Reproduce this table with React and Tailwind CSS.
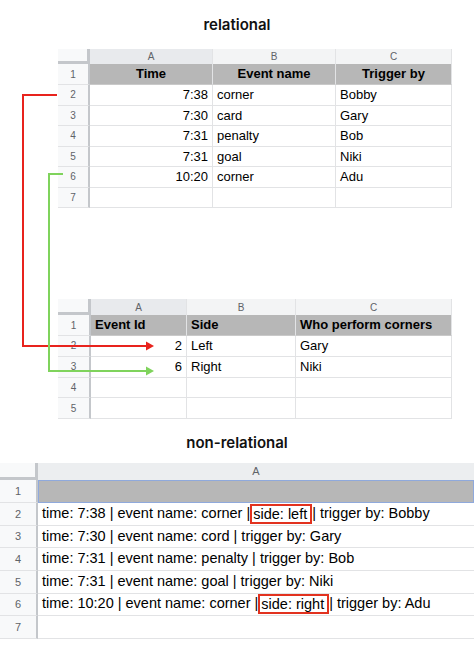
import React from "react";

const F = { fontFamily: '"Liberation Sans", Arial, sans-serif' };

function HeaderRow({ cols, heightClass, cornerW }) {
  return (
    <div className={`flex ${heightClass}`}>
      <div
        className="shrink-0 bg-[#f8f9fa] border-r-[3px] border-b-[3px] border-[#c4c7cb]"
        style={{ width: cornerW }}
      />
      {cols.map((c, i) => (
        <div
          key={i}
          className={`shrink-0 flex items-center justify-center text-[10px] text-[#5f6368] border-r border-[#e2e3e5] ${
            c.sel ? "bg-[#e8eaed]" : "bg-[#f3f4f5]"
          }`}
          style={{ width: c.w }}
        >
          {c.l}
        </div>
      ))}
    </div>
  );
}

function Row({ n, cells, cols, heightClass, cornerW, head }) {
  return (
    <div className={`flex ${heightClass}`}>
      <div
        className="shrink-0 flex items-center justify-center text-[10px] text-[#5f6368] bg-[#f8f9fa] border-r-[2px] border-r-[#c4c7cb] border-b border-b-[#e2e3e5]"
        style={{ width: cornerW }}
      >
        {n}
      </div>
      {cols.map((c, i) => {
        const cell = cells[i] || {};
        return (
          <div
            key={i}
            className={`shrink-0 flex items-center px-[4px] text-[13px] text-black whitespace-nowrap overflow-hidden border-r border-b border-[#e2e3e5] ${
              head ? "bg-[#b7b7b7] font-bold border-b-[#c9c9c9]" : "bg-white"
            } ${
              cell.a === "r"
                ? "justify-end"
                : cell.a === "c"
                ? "justify-center"
                : "justify-start"
            }`}
            style={{ width: c.w }}
          >
            {cell.t}
          </div>
        );
      })}
    </div>
  );
}

function Box({ children }) {
  return (
    <span className="border-2 border-[#e2321f] pl-[1px] pr-[3px] leading-[16px] inline-block">
      {children}
    </span>
  );
}

export default function App() {
  const cols1 = [
    { l: "A", w: 123, sel: true },
    { l: "B", w: 123 },
    { l: "C", w: 116 },
  ];
  const rows1 = [
    [{ t: "7:38", a: "r" }, { t: "corner" }, { t: "Bobby" }],
    [{ t: "7:30", a: "r" }, { t: "card" }, { t: "Gary" }],
    [{ t: "7:31", a: "r" }, { t: "penalty" }, { t: "Bob" }],
    [{ t: "7:31", a: "r" }, { t: "goal" }, { t: "Niki" }],
    [{ t: "10:20", a: "r" }, { t: "corner" }, { t: "Adu" }],
    [],
  ];
  const cols2 = [
    { l: "A", w: 96, sel: true },
    { l: "B", w: 109 },
    { l: "C", w: 156 },
  ];
  const rows2 = [
    [{ t: "2", a: "r" }, { t: "Left" }, { t: "Gary" }],
    [{ t: "6", a: "r" }, { t: "Right" }, { t: "Niki" }],
    [],
    [],
  ];
  const rows3 = [
    <>
      time: 7:38 | event name: corner |<Box>side: left</Box> | trigger by: Bobby
    </>,
    <>time: 7:30 | event name: cord | trigger by: Gary</>,
    <>time: 7:31 | event name: penalty | trigger by: Bob</>,
    <>time: 7:31 | event name: goal | trigger by: Niki</>,
    <>
      time: 10:20 | event name: corner |<Box>side: right</Box> | trigger by: Adu
    </>,
    null,
  ];

  return (
    <div className="relative w-[474px] h-[651px] bg-white overflow-hidden" style={F}>
      <div
        className="pt-[15px] h-[35px] text-center text-[15px] leading-[20px] font-semibold text-[#111]"
        style={{ fontFamily: "Inter, sans-serif" }}
      >
        relational
      </div>

      <div className="mt-[14px] ml-[58px] w-[394px]">
        <HeaderRow cols={cols1} heightClass="h-[15px]" cornerW={32} />
        <Row
          n={1}
          head
          cols={cols1}
          heightClass="h-[21px]"
          cornerW={32}
          cells={[
            { t: "Time", a: "c" },
            { t: "Event name", a: "c" },
            { t: "Trigger by", a: "c" },
          ]}
        />
        {rows1.map((r, i) => (
          <Row key={i} n={i + 2} cols={cols1} heightClass="h-[20.5px]" cornerW={32} cells={r} />
        ))}
      </div>

      <div className="mt-[91px] ml-[58px] w-[394px]">
        <HeaderRow cols={cols2} heightClass="h-[16px]" cornerW={33} />
        <Row
          n={1}
          head
          cols={cols2}
          heightClass="h-[21px]"
          cornerW={33}
          cells={[{ t: "Event Id" }, { t: "Side" }, { t: "Who perform corners" }]}
        />
        {rows2.map((r, i) => (
          <Row key={i} n={i + 2} cols={cols2} heightClass="h-[20.8px]" cornerW={33} cells={r} />
        ))}
      </div>

      <div
        className="mt-[14px] h-[20px] text-center text-[15px] leading-[20px] font-semibold text-[#111]"
        style={{ fontFamily: "Inter, sans-serif" }}
      >
        non-relational
      </div>

      <div className="mt-[10px] w-[474px]">
        <div className="flex h-[17px]">
          <div className="shrink-0 w-[38px] bg-[#f8f9fa] border-r-[3px] border-b-[3px] border-[#c4c7cb]" />
          <div className="flex-1 flex items-center justify-center text-[11px] text-[#5f6368] bg-[#eceef0]">
            A
          </div>
        </div>
        <div className="flex h-[23px]">
          <div className="shrink-0 w-[38px] flex items-center justify-center text-[11px] text-[#5f6368] bg-[#f8f9fa] border-r-[2px] border-r-[#c4c7cb] border-b border-b-[#e2e3e5]">
            1
          </div>
          <div className="flex-1 bg-[#b7b7b7] border border-[#8fa9dc]" />
        </div>
        {rows3.map((r, i) => (
          <div key={i} className="flex h-[22.6px]">
            <div className="shrink-0 w-[38px] flex items-center justify-center text-[11px] text-[#5f6368] bg-[#f8f9fa] border-r-[2px] border-r-[#c4c7cb] border-b border-b-[#e2e3e5]">
              {i + 2}
            </div>
            <div className="flex-1 flex items-center pl-[4px] text-[14.5px] text-black whitespace-nowrap border-b border-[#e2e3e5]">
              {r}
            </div>
          </div>
        ))}
      </div>

      <svg
        className="absolute left-0 top-0 pointer-events-none"
        width="474"
        height="651"
        viewBox="0 0 474 651"
      >
        <path d="M57 95 H23 V346 H147" fill="none" stroke="#e8231d" strokeWidth="2" />
        <path d="M146 341.5 L154 346 L146 350.5 Z" fill="#e8231d" />
        <path d="M63 174 H49 V371 H147" fill="none" stroke="#7fd35c" strokeWidth="2" />
        <path d="M146 366.5 L154 371 L146 375.5 Z" fill="#7fd35c" />
      </svg>
    </div>
  );
}
